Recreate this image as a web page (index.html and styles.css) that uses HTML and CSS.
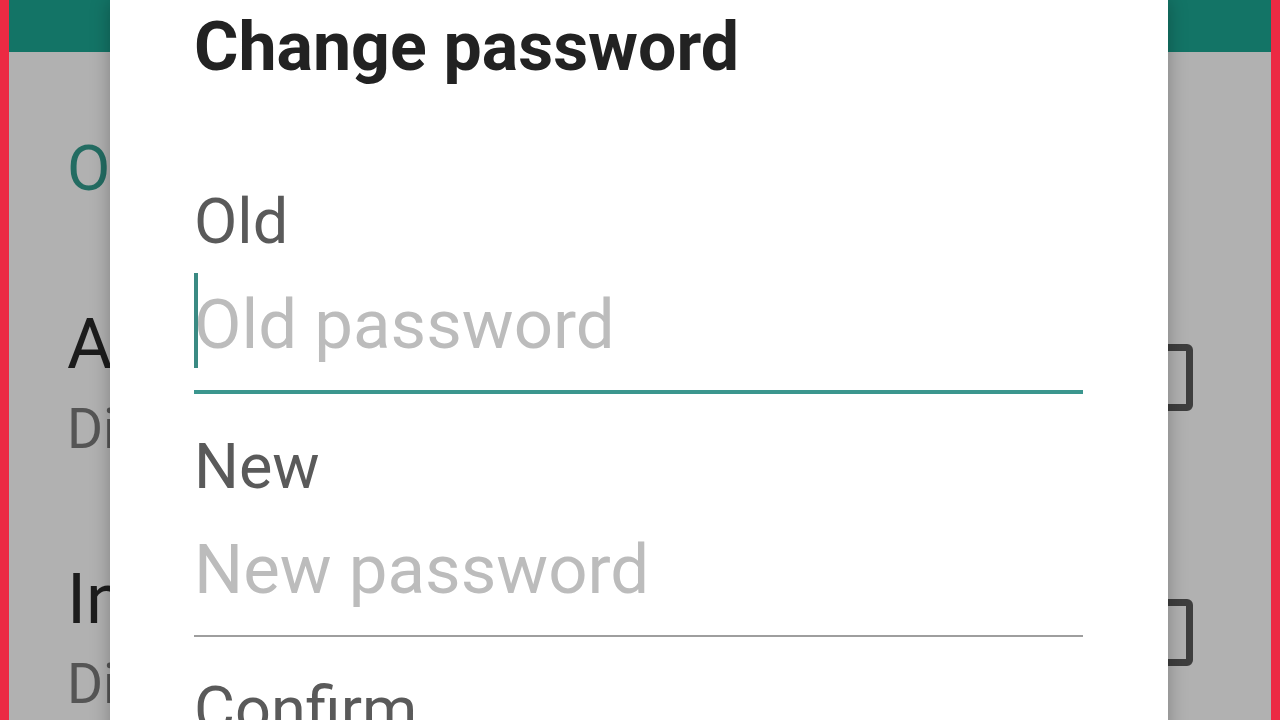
FILE: index.html
```html
<!DOCTYPE html>
<html lang="en">
<head>
<meta charset="utf-8">
<title>Change password</title>
<link rel="stylesheet" href="styles.css">
</head>
<body>
<div class="screen">
  <div class="appbar"></div>
  <div class="list">
    <div class="section">Other</div>
    <div class="row row-first">
      <div class="row-text">
        <div class="row-title">Auto-lock</div>
        <div class="row-sub">Disabled</div>
      </div>
      <div class="checkbox"></div>
    </div>
    <div class="row row-second">
      <div class="row-text">
        <div class="row-title">Incognito keyboard</div>
        <div class="row-sub">Disabled</div>
      </div>
      <div class="checkbox"></div>
    </div>
  </div>

  <div class="dialog">
    <div class="dialog-title">Change password</div>
    <div class="field">
      <div class="field-label">Old</div>
      <div class="field-input focused">
        <span class="caret"></span>
        <span class="placeholder">Old password</span>
      </div>
    </div>
    <div class="field">
      <div class="field-label">New</div>
      <div class="field-input">
        <span class="placeholder">New password</span>
      </div>
    </div>
    <div class="field">
      <div class="field-label">Confirm</div>
      <div class="field-input">
        <span class="placeholder">Confirm password</span>
      </div>
    </div>
  </div>
</div>
</body>
</html>
```

FILE: styles.css
```css
html, body {
  margin: 0;
  padding: 0;
}

body {
  width: 1280px;
  height: 720px;
  overflow: hidden;
  background: #ec2a43;
  font-family: Roboto, "Noto Sans", "Liberation Sans", sans-serif;
}

.screen {
  position: relative;
  margin: 0 9px;
  height: 720px;
  background: #b1b1b1;
  overflow: hidden;
}

.appbar {
  height: 52px;
  background: #137466;
}

.list {
  padding-left: 58px;
  padding-right: 78px;
}

.section {
  width: 43px;
  overflow: hidden;
  white-space: nowrap;
  margin-top: 82px;
  font-size: 63px;
  line-height: 70px;
  color: #236c62;
}

.row {
  display: flex;
  align-items: center;
  justify-content: space-between;
}

.row-first {
  margin-top: 100px;
}

.row-second {
  margin-top: 98px;
}

.row-text {
  flex: 0 0 43px;
  overflow: hidden;
  white-space: nowrap;
}

.row-title {
  font-size: 70px;
  line-height: 80px;
  color: #1c1c1c;
}

.row-sub {
  margin-top: 13px;
  font-size: 55px;
  line-height: 64px;
  color: #555555;
}

.checkbox {
  width: 53px;
  height: 53px;
  border: 7px solid #3e3e3e;
  border-radius: 6px;
  margin-bottom: 10px;
}

.dialog {
  position: absolute;
  top: 0;
  left: 101px;
  width: 1058px;
  height: 900px;
  box-sizing: border-box;
  padding: 7px 85px 0 84px;
  background: #ffffff;
  box-shadow: 0 0 18px rgba(0, 0, 0, 0.28);
}

.dialog-title {
  font-size: 68px;
  line-height: 80px;
  font-weight: 700;
  color: #222222;
  margin-bottom: 100px;
}

.field {
  margin-bottom: 38px;
}

.field-label {
  font-size: 63px;
  line-height: 70px;
  color: #5a5a5a;
}

.field-input {
  position: relative;
  padding: 28px 0 25px;
  font-size: 69px;
  line-height: 80px;
  border-bottom: 2px solid #9e9e9e;
}

.field-input.focused {
  border-bottom: 4px solid #3b968e;
}

.placeholder {
  color: #bcbcbc;
}

.caret {
  position: absolute;
  left: 0;
  top: 16px;
  width: 4px;
  height: 95px;
  background: #3a8a83;
}
```
